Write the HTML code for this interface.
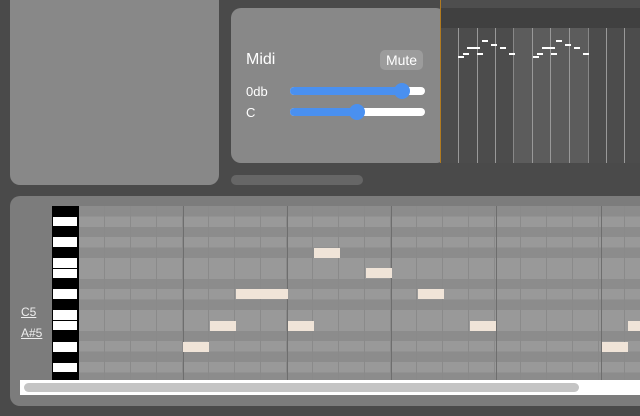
<!DOCTYPE html>
<html><head><style>
*{margin:0;padding:0;box-sizing:border-box}
body{width:640px;height:416px;background:#4a4a4a;position:relative;overflow:hidden;font-family:"Liberation Sans",sans-serif}
div{position:absolute}
.d{background:#fff;height:2px;width:6px}
.n{background:#f0e4d8;height:10px}
</style></head><body>
<div style="left:10px;top:-12px;width:209px;height:197px;background:#888;border-radius:10px"></div>
<div style="left:231px;top:8px;width:215px;height:155px;background:#888;border-radius:10px"></div>
<div style="left:246px;top:51px;color:#fff;font-size:16px">Midi</div>
<div style="left:380px;top:50px;width:43px;height:20px;background:#9c9c9c;border-radius:5px;color:#fff;font-size:14px;text-align:center;line-height:20px">Mute</div>
<div style="left:246px;top:84px;color:#fff;font-size:13px">0db</div>
<div style="left:246px;top:105px;color:#fff;font-size:13px">C</div>
<div style="left:290px;top:87px;width:135px;height:8px;background:#fff;border-radius:4px"></div>
<div style="left:290px;top:87px;width:112px;height:8px;background:#4a90f0;border-radius:4px"></div>
<div style="left:394px;top:83px;width:16px;height:16px;background:#4a90f0;border-radius:50%"></div>
<div style="left:290px;top:108px;width:135px;height:8px;background:#fff;border-radius:4px"></div>
<div style="left:290px;top:108px;width:67px;height:8px;background:#4a90f0;border-radius:4px"></div>
<div style="left:349px;top:104px;width:16px;height:16px;background:#4a90f0;border-radius:50%"></div>
<div style="left:231px;top:175px;width:132px;height:10px;background:#666;border-radius:5px"></div>
<div style="left:440px;top:0;width:200px;height:8px;background:#4e4e4e"></div>
<div style="left:440px;top:8px;width:200px;height:20px;background:#404040"></div>
<div style="left:440px;top:28px;width:200px;height:135px;background:#4c4c4c"></div>
<div style="left:513px;top:28px;width:75px;height:135px;background:#5c5c5c"></div>
<div style="left:440px;top:0;width:1px;height:163px;background:#b07a20"></div>
<div style="left:458px;top:28px;width:1px;height:135px;background:#999"></div>
<div style="left:477px;top:28px;width:1px;height:135px;background:#999"></div>
<div style="left:495px;top:28px;width:1px;height:135px;background:#999"></div>
<div style="left:513px;top:28px;width:1px;height:135px;background:#888"></div>
<div style="left:532px;top:28px;width:1px;height:135px;background:#999"></div>
<div style="left:550px;top:28px;width:1px;height:135px;background:#999"></div>
<div style="left:569px;top:28px;width:1px;height:135px;background:#999"></div>
<div style="left:588px;top:28px;width:1px;height:135px;background:#888"></div>
<div style="left:606px;top:28px;width:1px;height:135px;background:#999"></div>
<div style="left:624px;top:28px;width:1px;height:135px;background:#999"></div>
<div class="d" style="left:458px;top:56px"></div><div class="d" style="left:463px;top:53px"></div>
<div class="d" style="left:467px;top:47px;width:13px"></div><div class="d" style="left:477px;top:53px"></div>
<div class="d" style="left:482px;top:40px"></div><div class="d" style="left:491px;top:44px"></div>
<div class="d" style="left:500px;top:47px"></div><div class="d" style="left:509px;top:53px"></div>
<div class="d" style="left:533px;top:56px"></div><div class="d" style="left:537px;top:53px"></div>
<div class="d" style="left:542px;top:47px;width:13px"></div><div class="d" style="left:551px;top:53px"></div>
<div class="d" style="left:556px;top:40px"></div><div class="d" style="left:565px;top:44px"></div>
<div class="d" style="left:574px;top:47px"></div><div class="d" style="left:583px;top:53px"></div>
<div style="left:10px;top:196px;width:640px;height:210px;background:#7c7c7c;border-radius:10px"></div>
<div style="left:79px;top:206px;width:561px;height:174px;background:repeating-linear-gradient(90deg,transparent 0 25px,#8a8a8a 25px 26px),linear-gradient(#8c8c8c 0 10.4px,#999 10.4px 20.8px,#8c8c8c 20.8px 31.2px,#999 31.2px 41.6px,#8c8c8c 41.6px 52px,#999 52px 72.8px,#8c8c8c 72.8px 83.2px,#999 83.2px 93.6px,#8c8c8c 93.6px 104px,#999 104px 124.8px,#8c8c8c 124.8px 135.2px,#999 135.2px 145.6px,#8c8c8c 145.6px 156px,#999 156px 166.4px,#8c8c8c 166.4px 174px)"></div>
<div style="left:183px;top:206px;width:1px;height:174px;background:#6e6e6e"></div>
<div style="left:287px;top:206px;width:1px;height:174px;background:#6e6e6e"></div>
<div style="left:391px;top:206px;width:1px;height:174px;background:#6e6e6e"></div>
<div style="left:496px;top:206px;width:1px;height:174px;background:#6e6e6e"></div>
<div style="left:601px;top:206px;width:1px;height:174px;background:#6e6e6e"></div>
<div style="left:52px;top:206px;width:27px;height:174px;background:#000"></div>
<div style="left:53px;top:217px;width:24px;height:9px;background:#fff"></div>
<div style="left:53px;top:237px;width:24px;height:10px;background:#fff"></div>
<div style="left:53px;top:258px;width:24px;height:10px;background:#fff"></div>
<div style="left:53px;top:269px;width:24px;height:9px;background:#fff"></div>
<div style="left:53px;top:289px;width:24px;height:10px;background:#fff"></div>
<div style="left:53px;top:310px;width:24px;height:10px;background:#fff"></div>
<div style="left:53px;top:321px;width:24px;height:9px;background:#fff"></div>
<div style="left:53px;top:342px;width:24px;height:10px;background:#fff"></div>
<div style="left:53px;top:363px;width:24px;height:9px;background:#fff"></div>
<div style="left:21px;top:305px;color:#eee;font-size:12px;text-decoration:underline">C5</div>
<div style="left:21px;top:326px;color:#eee;font-size:12px;text-decoration:underline">A#5</div>
<div class="n" style="left:314px;top:248px;width:26px"></div>
<div class="n" style="left:366px;top:268px;width:26px"></div>
<div class="n" style="left:236px;top:289px;width:52px"></div>
<div class="n" style="left:418px;top:289px;width:26px"></div>
<div class="n" style="left:210px;top:321px;width:26px"></div>
<div class="n" style="left:288px;top:321px;width:26px"></div>
<div class="n" style="left:470px;top:321px;width:26px"></div>
<div class="n" style="left:628px;top:321px;width:12px"></div>
<div class="n" style="left:183px;top:342px;width:26px"></div>
<div class="n" style="left:602px;top:342px;width:26px"></div>
<div style="left:20px;top:380px;width:620px;height:15px;background:#fff"></div>
<div style="left:24px;top:383px;width:555px;height:9px;background:#c4c4c4;border-radius:5px"></div>
</body></html>
